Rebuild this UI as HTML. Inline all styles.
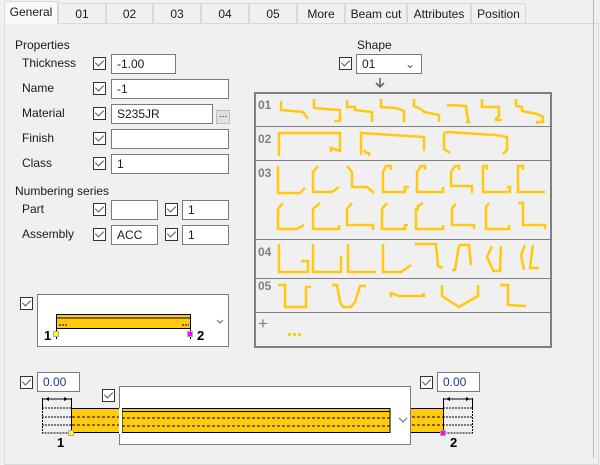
<!DOCTYPE html>
<html><head><style>
body{margin:0;width:600px;height:458px;background:#f0f0f0;font-family:"Liberation Sans",sans-serif;font-size:12px;color:#1a1a1a;position:relative;overflow:hidden}
.a{position:absolute}
.tab{position:absolute;top:3px;height:20px;border:1px solid #d9d9d9;border-bottom:none;background:#f0f0f0;text-align:center;line-height:20px;box-sizing:border-box}
.cb{position:absolute;width:13px;height:13px;border:1px solid #333;background:#fff;box-sizing:border-box}
.cb:after{content:"";position:absolute;left:3px;top:0px;width:4px;height:7px;border:solid #555;border-width:0 1.5px 1.5px 0;transform:rotate(45deg)}
.in{position:absolute;height:20px;border:1px solid #7a7a7a;background:#fff;box-sizing:border-box;padding-left:5px;line-height:18px}
</style></head><body>
<div class="a" style="left:4px;top:23px;width:593px;height:440px;border:1px solid #d9d9d9;background:#f0f0f0"></div>
<div class="tab" style="left:4px;top:1px;height:23px;width:54px;background:#f9f9f9;border-color:#d9d9d9">General</div>
<div class="tab" style="left:58px;width:48px">01</div>
<div class="tab" style="left:106px;width:47px">02</div>
<div class="tab" style="left:153px;width:48px">03</div>
<div class="tab" style="left:201px;width:48px">04</div>
<div class="tab" style="left:249px;width:48px">05</div>
<div class="tab" style="left:297px;width:48px">More</div>
<div class="tab" style="left:345px;width:62px">Beam cut</div>
<div class="tab" style="left:407px;width:64px">Attributes</div>
<div class="tab" style="left:471px;width:55px">Position</div>

<div class="a" style="left:15px;top:38px">Properties</div>
<div class="a" style="left:22px;top:56px">Thickness</div>
<div class="a" style="left:22px;top:81px">Name</div>
<div class="a" style="left:22px;top:106px">Material</div>
<div class="a" style="left:22px;top:131px">Finish</div>
<div class="a" style="left:22px;top:156px">Class</div>
<div class="a" style="left:15px;top:184px">Numbering series</div>
<div class="a" style="left:22px;top:202px">Part</div>
<div class="a" style="left:22px;top:227px">Assembly</div>

<div class="cb" style="left:93px;top:57px"></div><div class="in" style="left:111px;top:54px;width:65px">-1.00</div>
<div class="cb" style="left:93px;top:82px"></div><div class="in" style="left:111px;top:79px;width:118px">-1</div>
<div class="cb" style="left:93px;top:107px"></div><div class="in" style="left:111px;top:104px;width:102px">S235JR</div>
<div class="a" style="left:216px;top:110px;width:14px;height:14px;border:1px solid #bbb;background:#e1e1e1;box-sizing:border-box;font-size:10px;line-height:8px;text-align:center">...</div>
<div class="cb" style="left:93px;top:132px"></div><div class="in" style="left:111px;top:129px;width:118px"></div>
<div class="cb" style="left:93px;top:157px"></div><div class="in" style="left:111px;top:154px;width:118px">1</div>
<div class="cb" style="left:93px;top:203px"></div><div class="in" style="left:111px;top:200px;width:47px"></div>
<div class="cb" style="left:165px;top:203px"></div><div class="in" style="left:182px;top:200px;width:47px">1</div>
<div class="cb" style="left:93px;top:228px"></div><div class="in" style="left:111px;top:225px;width:47px">ACC</div>
<div class="cb" style="left:165px;top:228px"></div><div class="in" style="left:182px;top:225px;width:47px">1</div>

<div class="a" style="left:357px;top:38px">Shape</div>
<div class="cb" style="left:339px;top:57px"></div>
<div class="in" style="left:356px;top:54px;width:66px">01<span style="position:absolute;right:6px;top:0;color:#555">&#8964;</span></div>
<svg class="a" style="left:373px;top:77px" width="14" height="12"><path d="M7 1V10M3 6L7 10L11 6" stroke="#666" stroke-width="1.6" fill="none"/></svg>

<svg class="a" style="left:254px;top:92px" width="298" height="256">
<rect x="1" y="1" width="296" height="254" fill="#f0f0f0" stroke="#808080" stroke-width="2"/>
<g stroke="#808080" stroke-width="1"><line x1="1" y1="34.5" x2="297" y2="34.5"/><line x1="1" y1="68.5" x2="297" y2="68.5"/><line x1="1" y1="147.5" x2="297" y2="147.5"/><line x1="1" y1="186.5" x2="297" y2="186.5"/><line x1="1" y1="220.5" x2="297" y2="220.5"/></g>
<g fill="#7f7f7f" font-weight="bold" font-size="12" font-family="Liberation Sans"><text x="4" y="17">01</text><text x="4" y="51">02</text><text x="4" y="85">03</text><text x="4" y="164">04</text><text x="4" y="198">05</text><text x="4" y="237" font-size="17" font-weight="normal">+</text></g>
<g transform="translate(-254,-92)" fill="none" stroke="#ffc90e" stroke-width="2.5" stroke-linejoin="miter">
<path d="M281 101V110L303 112L308 119M314 99V108L340 110V121H334M347 100V107L355 107V110L372 112V122M381 99V107L396 108L404 111V122M414 99V106L421 109L424 112L439 115V122M447 105L466 106L467 115L469 122H466M482 99V107L499 107V116L496 119V120L502 120M516 99V106L522 107V111L537 114L543 117V122L537 122V124"/>
<path d="M279 156V133L340 133V151L331 148V152M361 155V133L424 137V151M364 150L366 153L369 153V156M444 133V149L450 153M444 133L448 132L495 135L507 137L507 150L503 154"/>
<path d="M278 166V193H300L305 188M318 166L313 172V192H332L339 187M347 166L352 172V187H367L374 193M391 170V166H386L383 172V192H405V187H409M425 170V166H421L417 172V192H443V187M459 170V166H455L451 172V186H472V193M487 170V166H483V192H510V187H507M523 170V166H518V192H545"/>
<path d="M283 203L278 209V229H297L304 225M320 203L313 209V229H339V225M352 203L347 209V225H373V230M387 203L382 209V229H405V225H408M423 203L418 206V209H416V229H443V225M456 204L452 208V225H474V229M489 203L486 207V229H509V225M518 203H523V225H545V229"/>
<path d="M279 244V272H308V261L301 261M313 244V272H341V256M348 244V272H376M383 244V272H401L411 265M415 244H436L438 266L443 268M459 245L455 270L452 270M459 245H469L471 265M492 246L487 257L493 270M501 246L500 271L492 271M525 245L521 255L524 270M533 245L530 268L539 268"/>
<path d="M278 285H285V307H306V287H311M332 285H337L340 302L343 307H351L355 302L360 286H366M391 297V293L399 296H424L423 293M442 285V296L459 307L478 296V285M500 285H508V305L526 306"/>
</g>
<g fill="#ffc90e"><rect x="34" y="241" width="3" height="3"/><rect x="39" y="241" width="3" height="3"/><rect x="44" y="241" width="3" height="3"/></g>
</svg>

<div class="cb" style="left:20px;top:297px"></div>
<div class="a" style="left:37px;top:294px;width:192px;height:53px;border:1px solid #7a7a7a;background:#fff;box-sizing:border-box"></div>
<svg class="a" style="left:37px;top:294px" width="192" height="53">
<rect x="19.5" y="20.5" width="134" height="14" fill="#ffc90e" stroke="#000"/><line x1="20" y1="24" x2="154" y2="24" stroke="#000"/>
<path d="M22 31H30M145 31H152" stroke="#000" stroke-dasharray="2,1"/>
<line x1="19.5" y1="35" x2="19.5" y2="45" stroke="#000"/><line x1="153.5" y1="35" x2="153.5" y2="45" stroke="#000"/>
<rect x="16.5" y="37.5" width="5" height="5" fill="#ff0" stroke="#aaa"/><rect x="150.5" y="37.5" width="5" height="5" fill="#f0f" stroke="#aaa"/>
<text x="7" y="46" font-weight="bold" font-size="13" font-family="Liberation Sans">1</text><text x="160" y="46" font-weight="bold" font-size="13" font-family="Liberation Sans">2</text>
<path d="M180 26L183 29L186 26" stroke="#666" fill="none"/>
</svg>

<div class="cb" style="left:20px;top:376px"></div><div class="in" style="left:37px;top:372px;width:43px;color:#1a3a8a">0.00</div>
<div class="cb" style="left:420px;top:376px"></div><div class="in" style="left:437px;top:372px;width:43px;color:#1a3a8a">0.00</div>
<svg class="a" style="left:0;top:390px" width="600" height="68">
<path d="M42.5 18V8M71.5 18V8M443.5 8V18M472.5 8V18M43 9H71M444 9H472" stroke="#000" fill="none"/>
<path d="M45 9L49 7V11ZM68 9L64 7V11ZM446 9L450 7V11ZM470 9L466 7V11Z" fill="#000"/>
<path d="M42.5 18V43H71M42 18H71M42 27H71M42 35H71M443 18H472M443 27H472M443 35H472M472.5 18V43H443" stroke="#000" stroke-dasharray="2,1" fill="none"/>
<rect x="71.5" y="18.5" width="372" height="24" fill="#ffc90e" stroke="#000"/>
<path d="M72 27H443M72 35H443" stroke="#000" stroke-dasharray="3,2"/>
<rect x="68.5" y="40.5" width="5" height="5" fill="#ff0" stroke="#aaa"/><rect x="440.5" y="40.5" width="5" height="5" fill="#f0f" stroke="#aaa"/>
<text x="57" y="57" font-weight="bold" font-size="13" font-family="Liberation Sans">1</text><text x="450" y="57" font-weight="bold" font-size="13" font-family="Liberation Sans">2</text>
</svg>
<div class="cb" style="left:102px;top:389px"></div>
<div class="a" style="left:119px;top:386px;width:292px;height:59px;border:1px solid #7a7a7a;background:#fff;box-sizing:border-box"></div>
<svg class="a" style="left:119px;top:386px" width="292" height="59">
<rect x="3" y="22.5" width="268" height="24" fill="#ffc90e" stroke="#000" stroke-width="1"/><line x1="3" y1="25.5" x2="271" y2="25.5" stroke="#000"/>
<path d="M3 32H271M3 40H271" stroke="#000" stroke-dasharray="3,2"/>
<rect x="0" y="22" width="3" height="26" fill="#fff"/>
<path d="M280 32L284 36L288 32" stroke="#666" fill="none"/>
</svg>
<div class="a" style="left:593px;top:0;width:1px;height:458px;background:#bbb"></div>
</body></html>
